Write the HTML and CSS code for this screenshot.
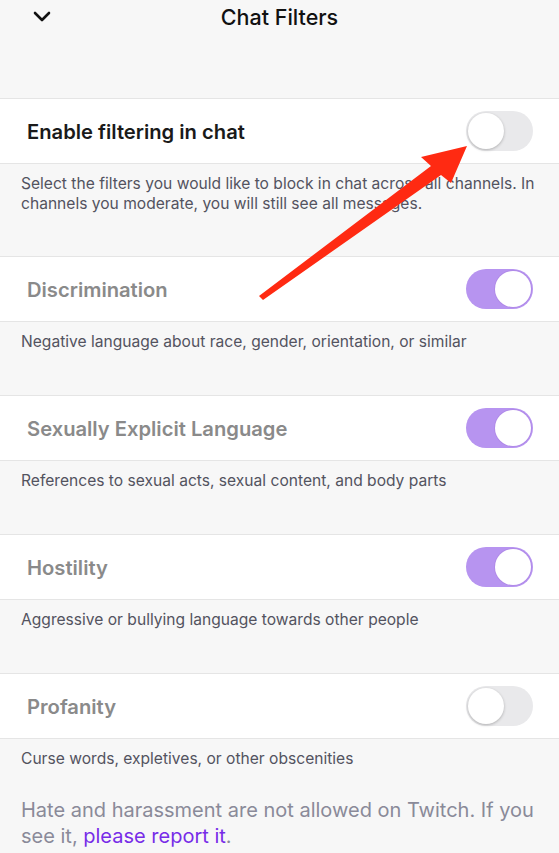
FILE: index.html
```html
<!DOCTYPE html>
<html lang="en">

<head>
  <meta charset="UTF-8" />
  <title>Chat Filters</title>
  <link rel="stylesheet" href="styles.css">
</head>

<body>
  <div class="topbar">
    <div class="nav">
      <svg class="chevron" width="20" height="14" viewBox="0 0 20 14">
        <path d="M3 3 L10 10 L17 3" fill="none" stroke="#111" stroke-width="2.6" stroke-linecap="round" stroke-linejoin="round" />
      </svg>
      <h1>Chat Filters</h1>
    </div>
  </div>

  <div class="row">
    <span class="label on">Enable filtering in chat</span>
    <span class="toggle"></span>
  </div>
  <p class="desc two">Select the filters you would like to block in chat across all channels. In channels you moderate, you will still see all messages.</p>

  <div class="row">
    <span class="label">Discrimination</span>
    <span class="toggle checked"></span>
  </div>
  <p class="desc">Negative language about race, gender, orientation, or similar</p>

  <div class="row">
    <span class="label">Sexually Explicit Language</span>
    <span class="toggle checked"></span>
  </div>
  <p class="desc">References to sexual acts, sexual content, and body parts</p>

  <div class="row">
    <span class="label">Hostility</span>
    <span class="toggle checked"></span>
  </div>
  <p class="desc">Aggressive or bullying language towards other people</p>

  <div class="row">
    <span class="label">Profanity</span>
    <span class="toggle"></span>
  </div>
  <p class="desc last">Curse words, expletives, or other obscenities</p>

  <p class="footer">Hate and harassment are not allowed on Twitch. If you see it, <a href="#">please report it</a>.</p>

  <!-- annotation arrow -->
  <svg class="arrow" width="559" height="853" viewBox="0 0 559 853">
    <polygon fill="#ff2a12" points="467,146 451,183 441,175 263,300 259,296 431,166 421,157" />
  </svg>
</body>

</html>
```

FILE: styles.css
```css
body {
  margin: 0;
  font-family: 'Inter', 'Liberation Sans', sans-serif;
  background: #f7f7f7;
  color: #1f1f23;
  position: relative;
  height: 853px;
  overflow: hidden;
}

.topbar {
  height: 98px;
}

.nav {
  display: flex;
  align-items: center;
  justify-content: center;
  height: 34px;
  position: relative;
}

.chevron {
  position: absolute;
  left: 32px;
  top: 10px;
}

h1 {
  margin: 0;
  font-size: 21.5px;
  font-weight: 500;
  color: #111;
}

.row {
  display: flex;
  align-items: center;
  justify-content: space-between;
  height: 64px;
  padding: 0 26px 0 27px;
  background: #fff;
  border-top: 1px solid #e5e5e5;
  border-bottom: 1px solid #e5e5e5;
}

.label {
  font-size: 20.2px;
  font-weight: 600;
  color: #8a8a8a;
}

.label.on {
  color: #1a1a1a;
}

.toggle {
  width: 67px;
  height: 40px;
  border-radius: 20px;
  background: #e9e9eb;
  display: flex;
  align-items: center;
  padding: 0 2px;
  box-sizing: border-box;
}

.toggle::after {
  content: "";
  width: 36px;
  height: 36px;
  border-radius: 50%;
  background: #fff;
  box-shadow: 0 1px 3px rgba(0, 0, 0, 0.25);
}

.toggle.checked {
  background: #b794f0;
  justify-content: flex-end;
}

.toggle.checked::after {
  box-shadow: 0 0 0 1px #b08ae8;
}

.desc {
  margin: 0;
  padding: 10px 21px 43px;
  font-size: 15.6px;
  line-height: 20px;
  color: #53535f;
}

.desc.two {
  padding-bottom: 42px;
}

.desc.last {
  padding-bottom: 0;
}

.footer {
  margin: 0;
  padding: 28px 21px 0;
  font-size: 20px;
  line-height: 26px;
  color: #8a8a99;
}

.footer a {
  color: #772ce8;
  text-decoration: none;
}

.arrow {
  position: absolute;
  left: 0;
  top: 0;
  pointer-events: none;
}
```
